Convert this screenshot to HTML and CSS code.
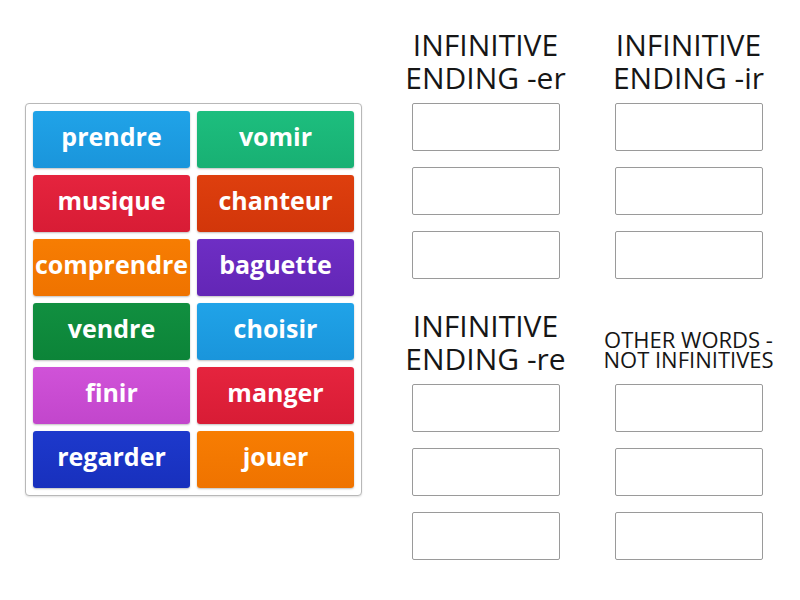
FILE: index.html
```html
<!DOCTYPE html>
<html lang="fr">
<head>
<meta charset="utf-8">
<title>Group sort</title>
<link rel="stylesheet" href="styles.css">
</head>
<body>
<div class="page">
  <div class="bank">
    <div class="tile blue">prendre</div>
    <div class="tile green">vomir</div>
    <div class="tile red">musique</div>
    <div class="tile rust">chanteur</div>
    <div class="tile orange">comprendre</div>
    <div class="tile purple">baguette</div>
    <div class="tile dgreen">vendre</div>
    <div class="tile blue">choisir</div>
    <div class="tile magenta">finir</div>
    <div class="tile red">manger</div>
    <div class="tile navy">regarder</div>
    <div class="tile orange">jouer</div>
  </div>
  <div class="groups">
    <div class="group">
      <div class="heading">INFINITIVE ENDING -er</div>
      <div class="slot"></div><div class="slot"></div><div class="slot"></div>
    </div>
    <div class="group">
      <div class="heading">INFINITIVE ENDING -ir</div>
      <div class="slot"></div><div class="slot"></div><div class="slot"></div>
    </div>
    <div class="group">
      <div class="heading">INFINITIVE ENDING -re</div>
      <div class="slot"></div><div class="slot"></div><div class="slot"></div>
    </div>
    <div class="group">
      <div class="heading small">OTHER WORDS - NOT INFINITIVES</div>
      <div class="slot"></div><div class="slot"></div><div class="slot"></div>
    </div>
  </div>
</div>
</body>
</html>
```
FILE: styles.css
```css
html, body {
  margin: 0;
  padding: 0;
  background: #ffffff;
  font-family: "Open Sans", "Liberation Sans", sans-serif;
}
.page {
  display: flex;
  align-items: flex-start;
  padding: 28px 0 0 25px;
}
.bank {
  margin-top: 75px;
  padding: 7px;
  border: 1px solid #b8b8b8;
  border-radius: 4px;
  box-shadow: 0 1px 2px rgba(0,0,0,0.12);
  display: grid;
  grid-template-columns: 157px 157px;
  grid-auto-rows: 57px;
  column-gap: 7px;
  row-gap: 7px;
  background: #fff;
}
.tile {
  display: flex;
  align-items: center;
  justify-content: center;
  padding-bottom: 7px;
  box-sizing: border-box;
  border-radius: 3px;
  color: #fff;
  font-weight: 700;
  font-size: 25px;
  line-height: 34px;
  white-space: nowrap;
  box-shadow: 0 1px 2px rgba(0,0,0,0.25);
}
.blue { background: linear-gradient(#20a3e8, #1a95db); }
.green { background: linear-gradient(#1dbe7e, #18b073); }
.red { background: linear-gradient(#e5243e, #d81c35); }
.rust { background: linear-gradient(#de3f0e, #d2360a); }
.orange { background: linear-gradient(#f77d02, #ef7300); }
.purple { background: linear-gradient(#6e2ec4, #6326b6); }
.dgreen { background: linear-gradient(#118f40, #0c8438); }
.magenta { background: linear-gradient(#d052d8, #c246cc); }
.navy { background: linear-gradient(#1d39cc, #1830bd); }
.groups {
  margin-left: 22px;
  display: grid;
  grid-template-columns: 203px 203px;
  row-gap: 30px;
}
.group {
  display: flex;
  flex-direction: column;
  align-items: center;
}
.heading {
  height: 66px;
  margin-bottom: 9px;
  width: 190px;
  text-align: center;
  color: #161616;
  font-size: 30px;
  line-height: 33px;
  display: flex;
  align-items: flex-start;
  justify-content: center;
}
.heading.small {
  font-size: 22px;
  line-height: 20px;
  align-items: flex-end;
  box-sizing: border-box;
  padding-bottom: 6px;
}
.slot {
  width: 148px;
  height: 48px;
  box-sizing: border-box;
  border: 1px solid #9a9a9a;
  border-radius: 2px;
  margin-bottom: 16px;
}
.slot:last-child { margin-bottom: 0; }
```
